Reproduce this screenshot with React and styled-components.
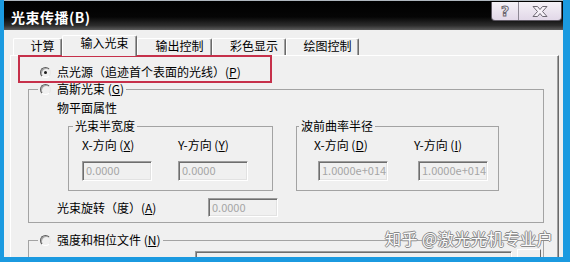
import React from 'react';
import styled, { createGlobalStyle } from 'styled-components';

const GlobalStyle = createGlobalStyle`
  html, body {
    margin: 0;
    padding: 0;
  }
  body {
    font-family: "Noto Sans CJK SC", "Noto Sans", sans-serif;
    color: #000;
  }
`;

export default function App() {
  return (
    <>
      <GlobalStyle />
      <Frame>
        <Window>
          <TitleBar>
            <Title>光束传播(B)</Title>
            <Caption>
              <CapButton $w={26}>
                <HelpGlyph>?</HelpGlyph>
              </CapButton>
              <CapButton $w={42}>
                <svg width="16" height="11" viewBox="0 0 16 11">
                  <path
                    d="M1 0.5h4.5l2.5 3 2.5-3H15l-4.5 5 4.5 5h-4.5L8 7.5l-2.5 3H1l4.5-5z"
                    fill="#f7f2f9"
                    stroke="#6d6872"
                    strokeWidth="1"
                  />
                </svg>
              </CapButton>
            </Caption>
          </TitleBar>

          <Body>
            <TabStrip>
              <Tab $w={49}>计算</Tab>
              <Tab $w={75} $active>输入光束</Tab>
              <Tab $w={75}>输出控制</Tab>
              <Tab $w={74}>彩色显示</Tab>
              <Tab $w={73}>绘图控制</Tab>
            </TabStrip>

            <Panel>
              <Highlight />
              <Option>
                <Radio $checked />
                <span>点光源（追迹首个表面的光线）(<Key>P</Key>)</span>
              </Option>

              <Group $w={516} $mt={1}>
                <Legend $ml={9}>
                  <Radio />
                  <span>高斯光束 (<Key>G</Key>)</span>
                </Legend>
                <GroupBody $pb={5}>
                  <Line>物平面属性</Line>
                  <SubRow>
                    <Group $w={205} $mt={2}>
                      <Legend $ml={4}>光束半宽度</Legend>
                      <SubBody $pl={13} $col={96}>
                        <Line>X-方向 (<Key>X</Key>)</Line>
                        <Line>Y-方向 (<Key>Y</Key>)</Line>
                        <Field>0.0000</Field>
                        <Field>0.0000</Field>
                      </SubBody>
                    </Group>
                    <Group $w={203} $mt={2}>
                      <Legend $ml={2}>波前曲率半径</Legend>
                      <SubBody $pl={17} $col={100}>
                        <Line>X-方向 (<Key>D</Key>)</Line>
                        <Line>Y-方向 (<Key>I</Key>)</Line>
                        <Field $inset={4}>1.0000e+014</Field>
                        <Field $inset={4}>1.0000e+014</Field>
                      </SubBody>
                    </Group>
                  </SubRow>
                  <RotateRow>
                    <Line $w={151}>光束旋转（度）(<Key>A</Key>)</Line>
                    <Field $h={19}>0.0000</Field>
                  </RotateRow>
                </GroupBody>
              </Group>

              <Group $w={516} $mt={9}>
                <Legend $ml={9}>
                  <Radio />
                  <span>强度和相位文件 (<Key>N</Key>)</span>
                </Legend>
                <GroupBody $pb={4}>
                  <FileRow>
                    <Line $w={133}>光束强度文件(<Key>C</Key>)</Line>
                    <Field $w={317} $h={22} />
                    <SmallButton />
                  </FileRow>
                </GroupBody>
              </Group>
            </Panel>
          </Body>
        </Window>
        <Watermark>知乎 @激光光机专业户</Watermark>
      </Frame>
    </>
  );
}

const Frame = styled.div`
  position: relative;
  width: 570px;
  height: 262px;
  box-sizing: border-box;
  padding: 0 7px 5px 4px;
  background: #1b9ae0;
  overflow: hidden;
  display: flex;
`;

const Window = styled.div`
  flex: 1;
  min-width: 0;
  display: flex;
  flex-direction: column;
  overflow: hidden;
  box-shadow: inset 1px 0 #c9d3da;
`;

const TitleBar = styled.div`
  flex: none;
  height: 30px;
  box-sizing: border-box;
  border-top: 1px solid #aeb6bd;
  display: flex;
  align-items: flex-start;
  justify-content: space-between;
  background: linear-gradient(to bottom, #000 0%, #050505 55%, #2e2e2e 85%, #5c5c5c 100%);
`;

const Title = styled.div`
  padding: 8px 0 0 7px;
  color: #fff;
  font-size: 14px;
  font-weight: 700;
  line-height: 16px;
  letter-spacing: 0.5px;
`;

const Caption = styled.div`
  display: flex;
  margin: 1px 1px 0 0;
  border: 1px solid #5f5a64;
  border-top: none;
  border-radius: 0 0 4px 4px;
  overflow: hidden;
  background: linear-gradient(to bottom, #f5f1f7, #e2d8e8);
`;

const CapButton = styled.div`
  width: ${p => p.$w}px;
  height: 18px;
  display: flex;
  align-items: center;
  justify-content: center;
  & + & {
    border-left: 1px solid #8e8894;
  }
`;

const HelpGlyph = styled.span`
  font-family: "DejaVu Sans", sans-serif;
  font-size: 14px;
  font-weight: 700;
  line-height: 14px;
  color: #f7f2f9;
  -webkit-text-stroke: 1px #6d6872;
`;

const Body = styled.div`
  flex: 1;
  min-height: 0;
  background: #f0f0f0;
  padding: 5px 4px 0 6px;
  display: flex;
  flex-direction: column;
`;

const TabStrip = styled.div`
  flex: none;
  height: 20px;
  padding-left: 3px;
  display: flex;
  align-items: flex-end;
`;

const Tab = styled.div`
  position: relative;
  z-index: ${p => (p.$active ? 1 : 0)};
  width: ${p => p.$w}px;
  height: ${p => (p.$active ? 21 : 17)}px;
  margin-bottom: ${p => (p.$active ? -1 : 0)}px;
  box-sizing: border-box;
  background: #f0f0f0;
  border-top: 1px solid #fff;
  border-left: 1px solid #fff;
  border-right: 1px solid #6a6a6a;
  border-radius: 2px 2px 0 0;
  box-shadow: inset -1px 0 #a0a0a0;
  padding-left: 10px;
  display: flex;
  justify-content: center;
  font-size: 12px;
  line-height: 14px;
`;

const Panel = styled.div`
  position: relative;
  flex: 1;
  min-height: 0;
  border-top: 1px solid #fff;
  border-left: 1px solid #fff;
  border-right: 1px solid #6a6a6a;
  box-shadow: inset -1px 0 #a0a0a0;
  padding: 8px 0 0 17px;
  display: flex;
  flex-direction: column;
  align-items: flex-start;
`;

const Highlight = styled.div`
  position: absolute;
  top: -1px;
  left: 7px;
  width: 254px;
  height: 28px;
  box-sizing: border-box;
  border: 2px solid #c6304a;
  pointer-events: none;
`;

const Option = styled.div`
  height: 16px;
  padding-left: 12px;
  display: flex;
  align-items: center;
  gap: 6px;
  font-size: 12px;
  line-height: 16px;
  white-space: nowrap;
`;

const Key = styled.span`
  text-decoration: underline;
`;

const Radio = styled.span`
  position: relative;
  flex: none;
  width: 11px;
  height: 11px;
  box-sizing: border-box;
  border-radius: 50%;
  border: 1px solid;
  border-color: #5a5a5a #e8e8e8 #fff #5a5a5a;
  box-shadow: inset 1px 1px #a8a8a8;
  &::after {
    content: '';
    display: ${p => (p.$checked ? 'block' : 'none')};
    position: absolute;
    left: 3px;
    top: 3px;
    width: 3px;
    height: 3px;
    border-radius: 50%;
    background: #1c1c1c;
  }
`;

const Group = styled.fieldset`
  margin: ${p => p.$mt}px 0 0 0;
  padding: 0;
  min-width: 0;
  width: ${p => p.$w}px;
  box-sizing: border-box;
  border: 1px solid #a3a3a3;
`;

const Legend = styled.legend`
  margin-left: ${p => p.$ml}px;
  padding: 0 2px;
  height: 16px;
  display: flex;
  align-items: center;
  gap: 6px;
  font-size: 12px;
  line-height: 16px;
  white-space: nowrap;
`;

const GroupBody = styled.div`
  padding: 3px 0 ${p => p.$pb}px 28px;
  display: flex;
  flex-direction: column;
  align-items: flex-start;
`;

const Line = styled.div`
  width: ${p => (p.$w ? `${p.$w}px` : 'auto')};
  flex: none;
  height: 16px;
  font-size: 12px;
  line-height: 16px;
  white-space: nowrap;
`;

const SubRow = styled.div`
  margin-left: 11px;
  display: flex;
  gap: 23px;
`;

const SubBody = styled.div`
  padding: 3px 0 9px ${p => p.$pl}px;
  display: grid;
  grid-template-columns: ${p => p.$col}px 74px;
  row-gap: 8px;
`;

const Field = styled.div`
  width: ${p => (p.$w ? p.$w : 70)}px;
  height: ${p => (p.$h ? p.$h : 20)}px;
  margin-left: ${p => (p.$inset ? p.$inset : 0)}px;
  box-sizing: border-box;
  border: 1px solid;
  border-color: #9c9c9c #fff #fff #9c9c9c;
  box-shadow: inset 1px 1px #6e6e6e, inset -1px -1px #e2e2e2;
  background: #f0f0f0;
  padding: 0 0 0 3px;
  font-size: 11px;
  line-height: 17px;
  color: #a6a6a6;
  white-space: nowrap;
  overflow: hidden;
`;

const RotateRow = styled.div`
  margin-top: 7px;
  display: flex;
  align-items: center;
`;

const FileRow = styled.div`
  display: flex;
  align-items: flex-start;
  gap: 5px;
  & > div:first-child {
    margin-top: 6px;
  }
`;

const SmallButton = styled.div`
  width: 24px;
  height: 22px;
  margin-top: -2px;
  box-sizing: border-box;
  border: 1px solid;
  border-color: #fff #6a6a6a #6a6a6a #fff;
  background: #f0f0f0;
`;

const Watermark = styled.div`
  position: absolute;
  left: 385px;
  top: 228px;
  font-size: 16px;
  line-height: 20px;
  letter-spacing: 0.5px;
  color: #fbfbfb;
  white-space: nowrap;
  pointer-events: none;
  text-shadow:
    1px 0 #8a8a8a, -1px 0 #8a8a8a, 0 1px #8a8a8a, 0 -1px #8a8a8a;
`;
